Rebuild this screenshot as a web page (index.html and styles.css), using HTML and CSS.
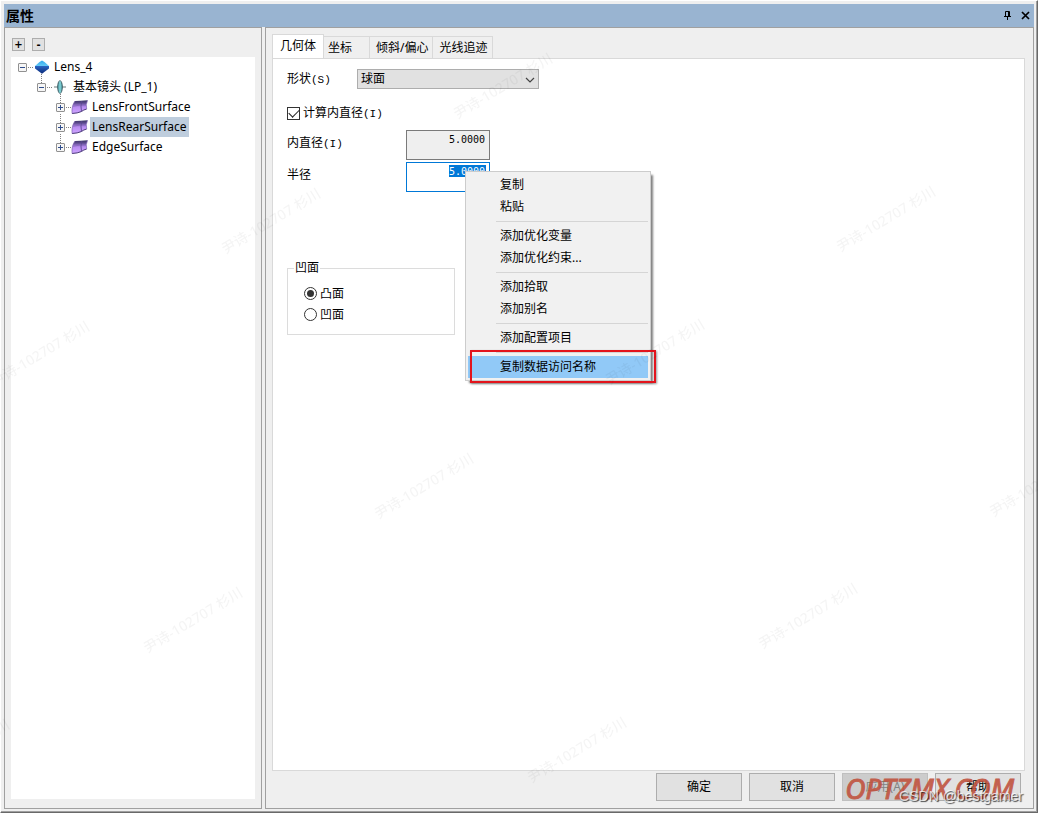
FILE: index.html
```html
<!DOCTYPE html>
<html lang="zh-CN">
<head>
<meta charset="utf-8">
<title>属性</title>
<link rel="stylesheet" href="styles.css">
</head>
<body>
<svg class="defs" aria-hidden="true">
  <defs>
    <linearGradient id="gemTop" x1="0" y1="0" x2="0" y2="1"><stop offset="0" stop-color="#2fa9ec"/><stop offset="1" stop-color="#6fd0fa"/></linearGradient>
    <linearGradient id="gemBottom" x1="0" y1="0" x2="0" y2="1"><stop offset="0" stop-color="#2a66c4"/><stop offset="1" stop-color="#0c2a78"/></linearGradient>
    <linearGradient id="sheet" x1="0" y1="0" x2="0" y2="1"><stop offset="0" stop-color="#3c3566"/><stop offset=".2" stop-color="#5b4a8c"/><stop offset=".5" stop-color="#b98cf2"/><stop offset="1" stop-color="#cfa4ff"/></linearGradient>
    <symbol id="surface" viewBox="0 0 16 14">
      <path d="M3.500 1Q9 .8 16 .3Q14 4.500 15.200 9Q12 9.800 10 11.500Q6 13.500.6 13.500Q-.2 6 3.500 1Z" fill="url(#sheet)"/>
      <path d="M.6 13.500Q6 13.300 10 11.500Q12 9.800 15.200 9" fill="none" stroke="#4b3a78"/>
      <path d="M10.300 1Q8.800 6 10 11.500" fill="none" stroke="#5a4690" stroke-width=".9"/>
      <path d="M1.200 6.500Q8 4.500 14.500 4.800" fill="none" stroke="#7a5eb4" stroke-width=".5"/>
      <path d="M3.500 1Q-.2 6 .6 13.500M16 .3Q14 4.500 15.200 9" fill="none" stroke="#7e63b5" stroke-width=".7"/>
    </symbol>
  </defs>
</svg>
<div class="window">
  <header class="titlebar">
    <h1>属性</h1>
    <button class="tool" type="button" aria-label="固定"><svg width="9" height="11" viewBox="0 0 9 11"><path d="M2.500 6V1.500H6.500V6M5.500 1V6M1 6.500H8M4.500 7V10" fill="none" stroke="#000"/></svg></button>
    <button class="tool" type="button" aria-label="关闭"><svg width="9" height="9" viewBox="0 0 9 9"><path d="M1 1L8 8M8 1L1 8" stroke="#000" stroke-width="1.700"/></svg></button>
  </header>
  <div class="panes">
    <aside class="pane side">
      <div class="side-tools">
        <button type="button">+</button>
        <button type="button">-</button>
      </div>
      <ul class="tree">
        <li>
          <div class="node root"><span class="twig open"></span><svg class="icon" width="16" height="14" viewBox="0 0 16 14"><path d="M1 6L5.500 2L8 .5L10.500 2L15 6L14 7H2Z" fill="url(#gemTop)"/><path d="M1 6H15V8.500L8 13.700L1 8.500Z" fill="url(#gemBottom)"/></svg><span class="name">Lens_4</span></div>
          <ul>
            <li>
              <div class="node"><span class="twig open"></span><svg class="icon" width="16" height="14" viewBox="0 0 16 14"><path d="M1 7H13" stroke="#b5bdbd" stroke-width="2"/><ellipse cx="7" cy="7" rx="2.300" ry="6.300" fill="#62b6bd" stroke="#3c5961"/><path d="M7 1V13" stroke="#8edce0"/></svg><span class="name">基本镜头 (LP_1)</span></div>
              <ul>
                <li><div class="node leaf"><span class="twig"></span><svg class="icon" width="17" height="14"><use href="#surface"/></svg><span class="name">LensFrontSurface</span></div></li>
                <li><div class="node leaf"><span class="twig"></span><svg class="icon" width="17" height="14"><use href="#surface"/></svg><span class="name selected">LensRearSurface</span></div></li>
                <li><div class="node leaf"><span class="twig"></span><svg class="icon" width="17" height="14"><use href="#surface"/></svg><span class="name">EdgeSurface</span></div></li>
              </ul>
            </li>
          </ul>
        </li>
      </ul>
    </aside>
    <main class="pane main">
      <div class="tabs" role="tablist">
        <button class="tab active" type="button" role="tab" aria-selected="true">几何体</button>
        <button class="tab wide" type="button" role="tab">坐标</button>
        <button class="tab" type="button" role="tab">倾斜/偏心</button>
        <button class="tab" type="button" role="tab">光线追迹</button>
      </div>
      <form class="sheet">
        <div class="row shape-row">
          <label for="shape">形状<span class="mono">(S)</span></label>
          <div class="select"><select id="shape"><option>球面</option></select><svg width="10" height="6" viewBox="0 0 10 6"><path d="M1 1L5 5L9 1" fill="none" stroke="#444" stroke-width="1.200"/></svg></div>
        </div>
        <div class="row check-row">
          <input type="checkbox" id="calc" checked>
          <label for="calc">计算内直径<span class="mono">(I)</span></label>
        </div>
        <div class="row field-row">
          <label for="inner">内直径<span class="mono">(I)</span></label>
          <input class="field" type="text" id="inner" value="5.0000" readonly>
        </div>
        <div class="row field-row">
          <label for="radius">半径</label>
          <input class="field editing" type="text" id="radius" value="5.0000">
        </div>
        <fieldset>
          <legend>凹面</legend>
          <div class="option"><input type="radio" name="side" id="convex" checked><label for="convex">凸面</label></div>
          <div class="option"><input type="radio" name="side" id="concave"><label for="concave">凹面</label></div>
        </fieldset>
        <div class="menu" role="menu">
          <button type="button" role="menuitem">复制</button>
          <button type="button" role="menuitem">粘贴</button>
          <hr>
          <button type="button" role="menuitem">添加优化变量</button>
          <button type="button" role="menuitem">添加优化约束...</button>
          <hr>
          <button type="button" role="menuitem">添加拾取</button>
          <button type="button" role="menuitem">添加别名</button>
          <hr>
          <button type="button" role="menuitem">添加配置项目</button>
          <hr>
          <button class="current" type="button" role="menuitem">复制数据访问名称</button>
          <div class="callout"></div>
        </div>
      </form>
      <footer class="actions">
        <button type="button">确定</button>
        <button type="button">取消</button>
        <button type="button" disabled>应用(A)</button>
        <button type="button">帮助</button>
        <div class="brand">OPTZMX.COM</div>
        <div class="credit">CSDN @bestgamer</div>
      </footer>
    </main>
  </div>
</div>
<div class="marks" aria-hidden="true">
  <span style="left:503px;top:86px">尹诗-102707 杉川</span>
  <span style="left:271px;top:221px">尹诗-102707 杉川</span>
  <span style="left:886px;top:219px">尹诗-102707 杉川</span>
  <span style="left:40px;top:354px">尹诗-102707 杉川</span>
  <span style="left:655px;top:352px">尹诗-102707 杉川</span>
  <span style="left:424px;top:486px">尹诗-102707 杉川</span>
  <span style="left:1039px;top:484px">尹诗-102707 杉川</span>
  <span style="left:193px;top:620px">尹诗-102707 杉川</span>
  <span style="left:808px;top:616px">尹诗-102707 杉川</span>
  <span style="left:577px;top:750px">尹诗-102707 杉川</span>
  <span style="left:-40px;top:752px">尹诗-102707 杉川</span>
</div>
</body>
</html>
```
FILE: styles.css
```css
* { box-sizing: border-box; }

body {
  margin: 0;
  font: 12px/16px "Noto Sans", "Noto Sans CJK SC", sans-serif;
  color: #000;
  background: #efefef;
}

button, input, select { font: inherit; color: inherit; margin: 0; }

ul { list-style: none; margin: 0; padding: 0; }

.defs { position: absolute; width: 0; height: 0; }

.window {
  display: flex;
  flex-direction: column;
  min-height: 100vh;
  padding: 3px 3px 2px 3px;
  border: 1px solid #fff;
  border-color: #fff #696969 #696969 #fff;
  box-shadow: inset -1px -1px #a0a0a0;
}

/* title bar */
.titlebar {
  display: flex;
  align-items: center;
  height: 23px;
  padding: 0 0 0 2px;
  background: #99b4d1;
}
.titlebar h1 { flex: 1; margin: 0; font-size: 14px; line-height: 20px; font-weight: 700; }
.tool {
  display: grid;
  place-items: center;
  width: 18px;
  height: 18px;
  padding: 0;
  border: 0;
  background: none;
}

.panes { flex: 1; display: flex; gap: 3px; padding-bottom: 1px; }
.pane { border: 1px solid #a0a0a0; background: #efefef; }

/* object tree */
.side { display: flex; flex-direction: column; width: 258px; padding: 10px 6px 9px; }
.side-tools { display: flex; gap: 7px; padding: 0 1px; margin-bottom: 6px; }
.side-tools button {
  width: 13px;
  height: 13px;
  padding: 0;
  border: 1px solid #adadad;
  background: #e1e1e1;
  font: 700 10px/11px "DejaVu Sans", sans-serif;
}
.tree { flex: 1; background: #fff; }
.tree ul { padding-left: 19px; }
.node { display: flex; align-items: center; height: 20px; padding-left: 7px; }
.twig {
  position: relative;
  width: 9px;
  height: 9px;
  margin-right: 7px;
  border: 1px solid #919191;
  border-radius: 1px;
  background:
    linear-gradient(#2f4d8c, #2f4d8c) center / 5px 1px no-repeat,
    linear-gradient(#2f4d8c, #2f4d8c) center / 1px 5px no-repeat,
    #f6f6f6;
}
.twig.open { background: linear-gradient(#2f4d8c, #2f4d8c) center / 5px 1px no-repeat, #f6f6f6; }
.leaf .twig { margin-right: 6px; }
.twig::before {
  content: "";
  position: absolute;
  left: 3px;
  bottom: 8px;
  height: 9px;
  border-left: 1px dotted #808080;
}
.root .twig::before { display: none; }
.twig::after {
  content: "";
  position: absolute;
  left: 9px;
  top: 3px;
  width: 5px;
  border-top: 1px dotted #808080;
}
.icon { flex: none; }
.name { padding: 0 2px; margin-left: 2px; line-height: 20px; }
.name.selected { background: #becddd; }

/* tab strip */
.main { flex: 1; display: flex; flex-direction: column; padding: 6px 8px 7px 6px; }
.tabs { display: flex; align-items: flex-end; }
.tab {
  height: 22px;
  padding: 0 4px 0 6px;
  border: 1px solid #d9d9d9;
  border-width: 1px 1px 0 0;
  background: #efefef;
}
.tab.wide { width: 46px; padding: 0 4px; text-align: left; }
.tab.active {
  position: relative;
  height: 25px;
  margin-bottom: -1px;
  padding: 0 7px 2px;
  border-left-width: 1px;
  background: #fff;
}

/* geometry form */
.sheet {
  position: relative;
  flex: 1;
  padding: 10px 14px;
  border: 1px solid #d9d9d9;
  background: #fff;
}
.row { display: flex; }
.mono { font: 11px/16px "Liberation Mono", monospace; }
.shape-row label { width: 70px; line-height: 20px; }
.select { position: relative; width: 182px; }
.select select {
  appearance: none;
  display: block;
  width: 100%;
  height: 20px;
  padding: 0 3px;
  border: 1px solid #adadad;
  border-radius: 0;
  background: #e1e1e1;
}
.select svg { position: absolute; right: 4px; top: 8px; }
.check-row { align-items: center; gap: 3px; height: 20px; margin: 14px 0 7px; }
input[type="checkbox"], input[type="radio"] {
  appearance: none;
  display: grid;
  place-items: center;
  width: 13px;
  height: 13px;
  border: 1px solid #333;
  background: #fff;
}
input[type="checkbox"]:checked::before {
  content: "";
  width: 9px;
  height: 5px;
  margin-bottom: 3px;
  border: 1px solid #222;
  border-width: 0 0 1px 1px;
  transform: rotate(-45deg);
}
input[type="radio"] { border-radius: 50%; }
input[type="radio"]:checked::before {
  content: "";
  width: 7px;
  height: 7px;
  border-radius: 50%;
  background: #333;
}
.field-row { margin-bottom: 2px; }
.field-row label { width: 119px; line-height: 26px; }
.field {
  width: 84px;
  height: 30px;
  padding: 0 4px 12px;
  border: 1px solid #7a7a7a;
  background: #efefef;
  font: 10px/16px "DejaVu Sans Mono", monospace;
  text-align: right;
}
.field.editing {
  border-color: #0078d7;
  background: linear-gradient(#0078d7, #0078d7) right 3px top 2px / 37px 12px no-repeat, #fff;
  color: #fff;
}
fieldset {
  width: 168px;
  margin: 68px 0 0;
  padding: 7px 16px 9px;
  border: 1px solid #dcdcdc;
}
legend { margin-left: -10px; padding: 0 1px; }
.option { display: flex; align-items: center; gap: 3px; height: 21px; }

/* context menu */
.menu {
  position: absolute;
  left: 192px;
  top: 112px;
  width: 186px;
  padding: 2px;
  border: 1px solid #ccc;
  background: #f1f1f1;
  box-shadow: 3px 3px 2px -1px rgba(0, 0, 0, .5);
}
.menu button {
  display: block;
  width: 100%;
  height: 22px;
  padding: 0 32px;
  border: 0;
  background: none;
  text-align: left;
}
.menu .current { background: #91c9f7; }
.menu hr { height: 1px; margin: 3px 0 3px 28px; border: 0; background: #d5d5d5; }
.callout {
  position: absolute;
  left: 4px;
  right: -6px;
  bottom: -3px;
  height: 33px;
  border: 2px solid #e3141c;
  box-shadow: 1px 1px 2px rgba(0, 0, 0, .4);
}

/* dialog buttons */
.actions { position: relative; display: flex; justify-content: flex-end; gap: 7px; padding: 2px 4px 0 0; }
.actions button {
  width: 86px;
  height: 28px;
  padding: 0;
  border: 1px solid #adadad;
  background: #e1e1e1;
}
.actions button:disabled { border-color: #bfbfbf; background: #ccc; color: #838383; }
.brand, .credit { position: absolute; white-space: nowrap; }
.brand {
  right: 11px;
  bottom: -5px;
  font: italic 28px/36px "Noto Sans", sans-serif;
  color: #c0533f;
  opacity: .9;
  -webkit-text-stroke: 1px #c0533f;
}
.credit {
  right: 2px;
  bottom: -5px;
  font: 14px/20px "Liberation Sans", sans-serif;
  color: rgba(255, 255, 255, .75);
  text-shadow: 1px 1px 1px rgba(0, 0, 0, .7);
}

/* tiled page mark */
.marks { position: fixed; inset: 0; overflow: hidden; pointer-events: none; }
.marks span {
  position: absolute;
  transform: translate(-50%, -50%) rotate(-31deg);
  font-size: 14px;
  font-weight: 500;
  white-space: nowrap;
  color: rgba(0, 0, 0, .045);
}
```
